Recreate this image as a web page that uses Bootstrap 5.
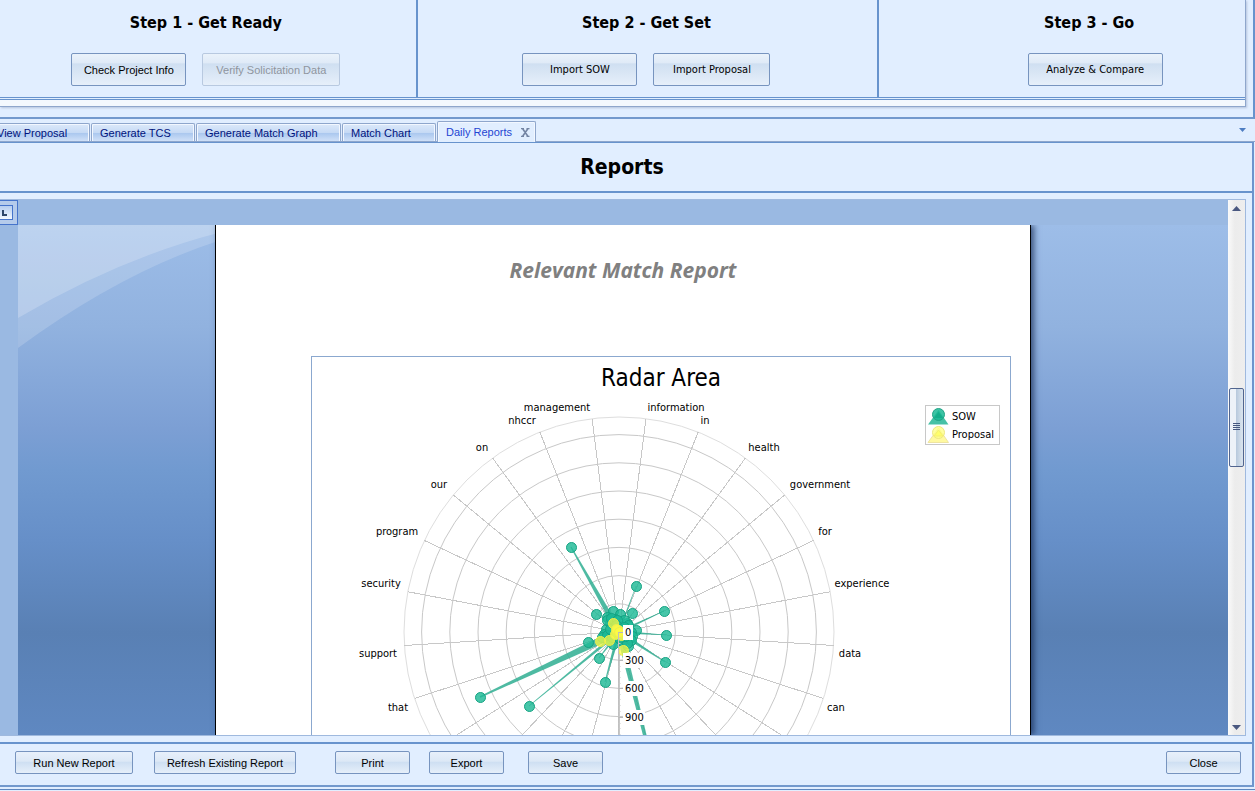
<!DOCTYPE html>
<html lang="en">
<head>
<meta charset="utf-8">
<meta name="viewport" content="width=device-width, initial-scale=1">
<title>Daily Reports</title>
<link href="https://cdn.jsdelivr.net/npm/bootstrap@5.3.0/dist/css/bootstrap.min.css" rel="stylesheet">
<style>
  :root { --line: #6793cd; --pane: #e1eeff; --edge: #8ea6cc; }
  body { background: var(--pane); color: #000; font: 11px/14px "Liberation Sans", Arial, sans-serif; overflow: hidden; }
  .ui-humanist { font-family: "DejaVu Sans Condensed", "DejaVu Sans", sans-serif; }

  /* wizard steps */
  .wizard { border-right: 2px solid var(--line); border-bottom: 2px solid #7399cd; padding: 0 7px 10px 0; }
  .wizard-inner { border-right: 1px solid var(--edge); border-bottom: 1px solid var(--edge); box-shadow: 1px 1px 2px #b5c3de; background: #f3f8fe; padding-bottom: 6px; }
  .steps { display: grid; grid-template-columns: 418fr 462fr 366fr; background: var(--pane); border-bottom: 3px double var(--line); }
  .step { height: 97px; padding: 13px 4px 0 0; text-align: center; }
  .step + .step { padding: 13px 2px 0 0; }
  .step:not(:last-child) { border-right: 2px solid var(--line); }
  .step:last-child { padding: 13px 0 0 54px; }
  .step h2 { font-size: 16px; line-height: 20px; font-weight: 700; margin: 0 0 20px; }
  .step:last-child .step-actions { padding-left: 12px; }

  /* buttons */
  .btn-skin { --bs-btn-color: #000; --bs-btn-font-size: 11px; --bs-btn-line-height: 14px; --bs-btn-padding-x: 0; --bs-btn-padding-y: 0;
    --bs-btn-border-color: #7794bf; --bs-btn-border-radius: 2px; --bs-btn-disabled-color: #8f959e; --bs-btn-disabled-border-color: #b8c9e0; --bs-btn-disabled-opacity: 1;
    background: linear-gradient(#eaf2fb 0, #dfeaf7 30%, #cfdff1 31%, #e6effa 100%); }
  .btn-tall { height: 33px; width: 115px; }
  .btn-tall.w-b { width: 138px; } .btn-tall.w-c { width: 117px; } .btn-tall.w-d { width: 135px; }
  .btn-low { height: 23px; width: 75px; background: linear-gradient(#e8f0fb 0, #dce8f6 45%, #cddef2 46%, #e6effa 100%); }
  .btn-low.w-a { width: 118px; } .btn-low.w-b { width: 142px; }

  /* document tabs */
  .tabstrip { height: 23px; border-bottom: 1px solid var(--edge); }
  .doc-tab { color: #00127c; text-decoration: none; height: 18px; line-height: 18px; padding-left: 8px; border: 1px solid var(--edge); border-bottom: 0; border-radius: 2px 2px 0 0;
    box-shadow: inset 1px 1px #f2f7ff, inset -1px 0 #f2f7ff; background: linear-gradient(#dce9fa 0, #c6daf5 50%, #abc8ef 55%, #cfe0f8 100%); margin-right: 1px; }
  .doc-tab.is-open { height: 21px; line-height: 20px; color: #1f45d2; background: var(--pane); margin-bottom: -1px; width: 99px; }
  .tab-view { width: 94px; margin-left: -4px; padding-left: 0; }
  .tab-tcs { width: 104px; }
  .tab-graph { width: 145px; }
  .tab-chart { width: 94px; }
  .tab-menu { width: 7px; height: 4px; background: #4d7dc2; clip-path: polygon(0 0, 100% 0, 50% 100%); border: 0; padding: 0; margin: 0 9px 9px 0; }
  .tab-close { border: 0; background: none; padding: 0; line-height: 0; }

  /* report pane */
  .report-pane { min-height: 0; border: 1px solid var(--line); border-left: 0; border-right: 2px solid #6d94cd; margin-right: 1px; border-bottom: 2px solid #7399cd; }
  .report-pane h1 { font-size: 21px; font-weight: 700; line-height: 24px; margin: 0; padding: 12px 8px 12px 0; }
  .viewer { border: 1px solid #9fb9de; border-left: 0; margin: 6px 6px 6px 0; }
  .rule-line { border-top: 2px solid var(--line); }
  .ruler-h { height: 25px; background: #9ab9e2; }
  .ruler-v { width: 18px; background: #9ab9e2; }
  .tab-stop { width: 18px; height: 25px; border: 1px solid #4674cb; border-left: 0; background: #b5cbeb; padding: 4px 4px 4px 0; }
  .tab-stop span { height: 15px; border: 1px solid #4674cb; border-left: 0; background: linear-gradient(#b5cdf0, #f2f7fe); }
  .tab-stop i { width: 5px; height: 6px; border: solid #2d4569; border-width: 0 0 2px 2px; margin: 4px 0 0 2px; }
  .canvas { background: linear-gradient(#9dbde8 0, #91b2df 20%, #7c9fd4 40%, #719ad0 48%, #668fc8 62%, #5980b4 80%, #5f88c1 100%); }
  .swoosh { position: absolute; left: 0; top: 0; }
  .sheet { position: relative; width: 816px; background: #fff; border: 1px solid #000; border-width: 0 1px; box-shadow: 3px 0 6px rgba(20,40,80,.7); padding: 31px 19px 0 95px; }
  .sheet h3 { font: italic 700 21px/28px "Open Sans", sans-serif; color: #808080; margin: 0 76px 72px 0; text-align: center; }
  .chart-frame { border: 1px solid #8ba8cf; }
  .chart-frame text { font: 11px "DejaVu Sans Condensed", "DejaVu Sans", sans-serif; }
  .chart-frame .chart-title { font-size: 24px; }
  .scroller { width: 17px; background: linear-gradient(90deg, #fafafa, #ececec 40%, #eee); padding: 6px 1px 5px; }
  .arrow { width: 9px; height: 5px; background: #4a5880; clip-path: polygon(50% 0, 100% 100%, 0 100%); }
  .arrow.is-down { transform: rotate(180deg); }
  .track-above { flex: 177 0 0; }
  .track-below { flex: 259 0 0; }
  .thumb { width: 15px; height: 79px; border: 1px solid #51658f; border-radius: 2px; background: linear-gradient(90deg, #edf2f8 45%, #b9cadd 50%, #d6e1ec 90%); }
  .thumb span { width: 7px; height: 8px; background: repeating-linear-gradient(#46587f 0 1px, transparent 1px 2px); }
  .page-foot { border-bottom: 1px solid #5f87bf; height: 3px; margin-bottom: 1px; }
  .bottom-bar { padding: 7px 11px 11px 15px; }
  .ms-19 { margin-left: 19px; } .ms-21 { margin-left: 21px; } .ms-24 { margin-left: 24px; } .ms-39 { margin-left: 39px; }
</style>
</head>
<body class="vh-100 d-flex flex-column">

<header class="wizard flex-shrink-0">
  <div class="wizard-inner">
    <div class="steps">
      <section class="step">
        <h2 class="ui-humanist">Step 1 - Get Ready</h2>
        <div class="step-actions d-flex justify-content-center gap-3">
          <button class="btn btn-skin btn-tall" type="button">Check Project Info</button>
          <button class="btn btn-skin btn-tall w-b" type="button" disabled>Verify Solicitation Data</button>
        </div>
      </section>
      <section class="step">
        <h2 class="ui-humanist">Step 2 - Get Set</h2>
        <div class="step-actions d-flex justify-content-center gap-3">
          <button class="btn btn-skin btn-tall ui-humanist" type="button">Import SOW</button>
          <button class="btn btn-skin btn-tall w-c ui-humanist" type="button">Import Proposal</button>
        </div>
      </section>
      <section class="step">
        <h2 class="ui-humanist">Step 3 - Go</h2>
        <div class="step-actions d-flex justify-content-center">
          <button class="btn btn-skin btn-tall w-d ui-humanist" type="button">Analyze &amp; Compare</button>
        </div>
      </section>
    </div>
  </div>
</header>

<nav class="tabstrip flex-shrink-0 d-flex align-items-end" aria-label="Documents">
  <a href="#" class="doc-tab tab-view">View Proposal</a>
  <a href="#" class="doc-tab tab-tcs">Generate TCS</a>
  <a href="#" class="doc-tab tab-graph">Generate Match Graph</a>
  <a href="#" class="doc-tab tab-chart">Match Chart</a>
  <div class="doc-tab is-open d-flex justify-content-between pe-1"><span>Daily Reports</span>
    <button class="tab-close" type="button" aria-label="Close tab"><svg width="11" height="9" viewBox="0 0 11 9"><path d="M1 .5h3M6.500 .5h3M1 8.500h3M6.500 8.500h3M2.500 .5l5.500 8M8 .5l-5.500 8" stroke="#7384a3" stroke-width="1.600" fill="none"/></svg></button>
  </div>
  <button class="tab-menu ms-auto" type="button" aria-label="Tab list"></button>
</nav>

<main class="report-pane flex-grow-1 d-flex flex-column">
  <h1 class="ui-humanist text-center">Reports</h1>
  <div class="rule-line"></div>

  <div class="viewer flex-grow-1 d-flex overflow-hidden">
    <div class="flex-grow-1 d-flex flex-column">
      <div class="ruler-h"><div class="tab-stop"><span class="d-block overflow-hidden"><i class="d-block"></i></span></div></div>
      <div class="flex-grow-1 d-flex overflow-hidden">
        <div class="ruler-v flex-shrink-0"></div>
        <div class="canvas position-relative flex-grow-1 d-flex justify-content-center overflow-hidden">
          <svg class="swoosh" width="200" height="126" aria-hidden="true">
            <path d="M0 0H200V16Q102 48 0 123Z" fill="#fff" fill-opacity=".17"/>
            <path d="M0 0H200V8Q100 34 0 93Z" fill="#fff" fill-opacity=".2"/>
          </svg>
          <article class="sheet flex-shrink-0">
            <h3>Relevant Match Report</h3>
            <div class="chart-frame">
              <svg id="radar" class="d-block w-100" viewBox="-307 -275 698 560" role="img" aria-label="Radar Area">
                <text class="chart-title" x="42" y="-246" text-anchor="middle">Radar Area</text>
                <g id="grid" fill="none" stroke="#c8c8c8"></g>
                <g id="names" text-anchor="middle"></g>
                <g id="series"></g>
                <g id="axis"></g>
                <g id="legend">
                  <rect x="306.500" y="-226.500" width="74" height="39" fill="#fff" stroke="#c8c8c8"/>
                  <path d="M309 -207.500L319.500 -222L329.500 -207.500Z" fill="#46c1a6"/>
                  <circle cx="319.500" cy="-217.500" r="6" fill="#1bb994" fill-opacity=".85" stroke="#22a386"/>
                  <path d="M315 -214L319.500 -220L324 -214Z" fill="#0ca582" fill-opacity=".6"/>
                  <path d="M309 -189.500L319.500 -204L329.500 -189.500Z" fill="#fff9a0" stroke="#eee4a0"/>
                  <circle cx="319.500" cy="-199.500" r="6" fill="#ffff8a" fill-opacity=".8" stroke="#eee880"/>
                  <path d="M315 -196L319.500 -202L324 -196Z" fill="#ffff6b" stroke="#f4ee70"/>
                  <text x="333" y="-212">SOW</text>
                  <text x="333" y="-194">Proposal</text>
                </g>
              </svg>
            </div>
          </article>
        </div>
      </div>
    </div>
    <div class="scroller flex-shrink-0 d-flex flex-column align-items-center">
      <div class="arrow"></div>
      <div class="d-flex flex-column flex-grow-1 align-items-center">
        <div class="track-above"></div>
        <div class="thumb flex-shrink-0 d-flex align-items-center justify-content-center"><span></span></div>
        <div class="track-below"></div>
      </div>
      <div class="arrow is-down"></div>
    </div>
  </div>

  <div class="rule-line"></div>
  <footer class="bottom-bar d-flex">
    <button class="btn btn-skin btn-low w-a" type="button">Run New Report</button>
    <button class="btn btn-skin btn-low w-b ms-21" type="button">Refresh Existing Report</button>
    <button class="btn btn-skin btn-low ms-39" type="button">Print</button>
    <button class="btn btn-skin btn-low ms-19" type="button">Export</button>
    <button class="btn btn-skin btn-low ms-24" type="button">Save</button>
    <button class="btn btn-skin btn-low ms-auto" type="button">Close</button>
  </footer>
</main>
<div class="page-foot flex-shrink-0"></div>

<script src="https://cdn.jsdelivr.net/npm/bootstrap@5.3.0/dist/js/bootstrap.bundle.min.js"></script>
<script>
  // Radar chart: the origin of the drawing is the centre of the radar.
  const NS = 'http://www.w3.org/2000/svg';
  const add = (id, tag, attrs, text) => {
    const el = document.createElementNS(NS, tag);
    for (const k in attrs) el.setAttribute(k, attrs[k]);
    if (text) el.textContent = text;
    document.getElementById(id).append(el);
  };
  const UNIT = 28.2, EDGE = 215;
  for (let i = 1; i <= 7; i++) add('grid', 'circle', { r: i * UNIT, 'stroke-width': 1 });
  add('grid', 'circle', { r: EDGE, stroke: '#dedede' });
  for (let i = 0; i < 25; i++) {
    const a = (7.2 + 14.4 * i) * Math.PI / 180;
    add('grid', 'line', { x1: 0, y1: 0, x2: EDGE * Math.sin(a), y2: -EDGE * Math.cos(a), 'shape-rendering': 'crispEdges' });
  }
  const names = [['information', 57, -221], ['in', 86, -208], ['health', 145, -181], ['government', 201, -144], ['for', 206, -97],
    ['experience', 243, -45], ['data', 231, 25], ['can', 217, 79], ['that', -221, 79], ['support', -241, 25], ['security', -238, -45],
    ['program', -222, -97], ['our', -180, -144], ['on', -137, -181], ['nhccr', -97, -208], ['management', -62, -221]];
  names.forEach(([t, x, y]) => add('names', 'text', { x, y }, t));

  // Spikes of the area: tip and width at the foot; the last one runs on past the visible part.
  const spikes = [[-48, -85, 6], [17, -46, 2], [45, -21, 3], [47, 3, 3], [46, 30, 4], [-139, 65, 8], [-90, 74, 3], [-20, 26, 3], [-14, 50, 4], [50, 200, 6]];
  spikes.forEach(([x, y, w]) => {
    const d = Math.hypot(x, y), nx = -y / d * w / 2, ny = x / d * w / 2;
    add('series', 'polygon', { points: [[nx, ny], [-nx, -ny], [x - nx * .2, y - ny * .2], [x + nx * .2, y + ny * .2]].join(' '), fill: '#2fae92', 'fill-opacity': .85 });
  });
  const dot = (x, y, c, s, o) => add('series', 'circle', { cx: x + .5, cy: y + .5, r: 5, fill: c, stroke: s, 'fill-opacity': o });
  const sow = [[-48, -85], [17, -46], [45, -21], [47, 3], [46, 30], [-139, 65], [-90, 74], [-20, 26], [-14, 50], [-31, 10], [-23, -18], [-6, -21],
    [1, -18], [13, -19], [17, -2], [9, 14], [-12, -15], [-9, -9], [-13, -3], [-15, 2], [-17, 5], [-6, 12], [8, -9], [11, 6], [12, 0], [-4, -13], [3, 9], [-10, 8], [5, -12], [-12, 3], [13, 4],
    [-12, -12], [-8, -14], [-2, -12], [9, -7], [12, 8], [8, 11], [-7, 5], [-3, -7], [5, -5], [6, 4], [-9, -3], [0, 6]];
  sow.forEach(([x, y]) => dot(x, y, '#1fb996', '#14a383', .82));
  const prop = [[-19, 9], [-10, 8], [-6, -9], [4, 18], [-4, 2], [-1, -2], [2, 3], [-3, -3], [0, 0]];
  prop.forEach(([x, y], i) => dot(x, y, '#fafa45', '#eeee4c', i < 4 ? .75 : .9));

  // Value axis
  add('axis', 'path', { d: 'M-.5 0V200', stroke: '#c0c0c0', fill: 'none' });
  for (let i = 0; i < 4; i++) {
    const y = Math.round(i * UNIT);
    add('axis', 'path', { d: `M-.5 ${y + .5}h6`, stroke: '#b8b8b8' });
    for (let k = 1; k < 5; k++) add('axis', 'path', { d: `M-.5 ${Math.round(y + k * UNIT / 5) + .5}h2`, stroke: '#c8c8c8' });
    const label = String(i * 300);
    add('axis', 'rect', { x: 4, y: y - 7, width: label.length > 1 ? 22 : 10, height: 15, fill: '#fff' });
    add('axis', 'text', { x: 6, y: y + 4 }, label);
  }
</script>
</body>
</html>
